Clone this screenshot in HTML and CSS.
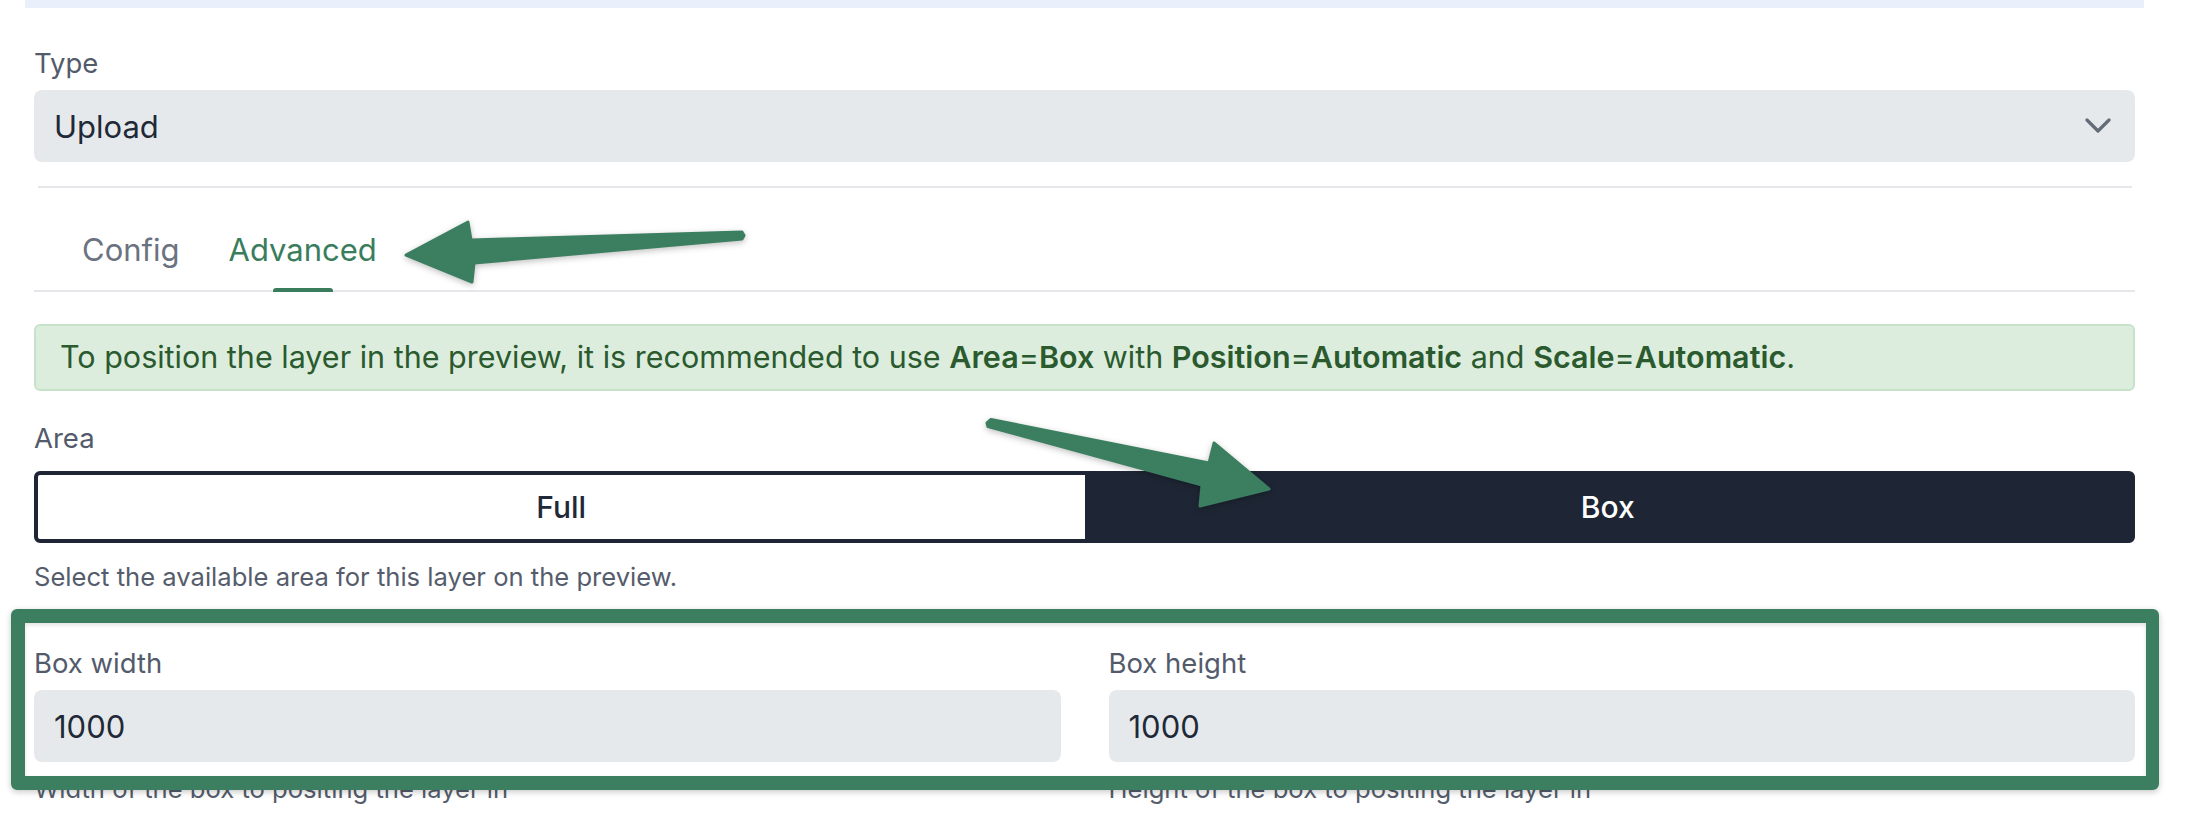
FILE: index.html
```html
<!DOCTYPE html>
<html lang="en">
<head>
<meta charset="utf-8">
<title>Layer settings</title>
<link rel="stylesheet" href="styles.css">
</head>
<body>
<div class="page">
  <div class="prev-edge"></div>

  <div class="field type-field">
    <div class="label">Type</div>
    <div class="select">
      <span>Upload</span>
      <svg class="chevron" width="26" height="16" viewBox="0 0 26 16"><path d="M2 2 L13 13 L24 2" fill="none" stroke="#656c79" stroke-width="3.2" stroke-linecap="round" stroke-linejoin="round"/></svg>
    </div>
  </div>

  <div class="divider"></div>

  <div class="tabs">
    <div class="tab">Config</div>
    <div class="tab active">Advanced</div>
  </div>

  <div class="alert">To position the layer in the preview, it is recommended to use <b>Area</b>=<b>Box</b> with <b>Position</b>=<b>Automatic</b> and <b>Scale</b>=<b>Automatic</b>.</div>

  <div class="field area-field">
    <div class="label area-label">Area</div>
    <div class="toggle">
      <div class="seg">Full</div>
      <div class="seg on">Box</div>
    </div>
    <div class="help">Select the available area for this layer on the preview.</div>
  </div>

  <div class="box-grid">
    <div class="field">
      <div class="label">Box width</div>
      <div class="input">1000</div>
      <div class="help desc">Width of the box to positing the layer in</div>
    </div>
    <div class="field">
      <div class="label">Box height</div>
      <div class="input">1000</div>
      <div class="help desc">Height of the box to positing the layer in</div>
    </div>
  </div>

  <div class="highlight"></div>

  <svg class="arrows" width="2186" height="814" viewBox="0 0 2186 814">
    <g fill="#3b7e60" stroke="#3b7e60" stroke-width="3" stroke-linejoin="round">
      <polygon points="406,255 468,222 471,240 742,232 744,235.5 742,239 474,263 472,282"/>
      <polygon points="991,419.5 1209,463 1214,443 1269,489 1200,506 1202,485 988,426.5 987,423"/>
    </g>
  </svg>
</div>
</body>
</html>
```

FILE: styles.css
```css
* { box-sizing: border-box; }

html, body {
  margin: 0;
  padding: 0;
  background: #ffffff;
}

body {
  font-family: "Inter", "Noto Sans", "Liberation Sans", sans-serif;
  color: #1f2937;
  overflow: hidden;
}

.page {
  position: relative;
  width: 2186px;
  height: 814px;
  padding: 0 51px 0 34px;
}

.prev-edge {
  height: 8px;
  margin: 0 -9px;
  background: #e9f0fb;
}

.label {
  font-size: 27.5px;
  line-height: 36px;
  color: #535b6b;
  margin-bottom: 9px;
}

.type-field {
  margin-top: 37px;
}

.select {
  height: 72px;
  background: #e6e9ec;
  border-radius: 8px;
  padding: 0 24px 0 20px;
  display: flex;
  align-items: center;
  justify-content: space-between;
  font-size: 31px;
  color: #1f2937;
}

.chevron { display: block; }

.divider {
  height: 2px;
  margin: 24px 3px 0 4px;
  background: #e5e7eb;
}

.tabs {
  display: flex;
  padding-left: 40px;
  border-bottom: 2px solid #e5e7eb;
}

.tab {
  position: relative;
  font-size: 31px;
  line-height: 40px;
  padding: 42px 8px 20px;
  margin-right: 33px;
  color: #6b7280;
}

.tab.active {
  color: #3a7d5d;
}

.tab.active::after {
  content: "";
  position: absolute;
  left: 50%;
  bottom: -2px;
  width: 60px;
  height: 4px;
  margin-left: -30px;
  border-radius: 3px 3px 0 0;
  background: #3a7d5d;
}

.alert {
  margin-top: 32px;
  height: 67px;
  padding: 11px 24px 12px;
  background: #dcedde;
  border: 2px solid #c6e3c9;
  border-radius: 6px;
  font-size: 30.5px;
  line-height: 40px;
  color: #2a5a2d;
  white-space: nowrap;
}

.alert b { font-weight: 600; }

.area-label {
  margin-top: 29px;
  margin-bottom: 15px;
}

.toggle {
  display: flex;
  height: 72px;
  border: 4px solid #1e2635;
  border-radius: 6px;
  overflow: hidden;
  background: #1e2635;
}

.seg {
  flex: 1;
  display: flex;
  align-items: center;
  justify-content: center;
  font-size: 30px;
  font-weight: 500;
  background: #ffffff;
  color: #1f2937;
}

.seg.on {
  background: #1e2635;
  color: #ffffff;
}

.help {
  font-size: 25.6px;
  line-height: 36px;
  color: #555d6c;
  margin-top: 16px;
}

.box-grid {
  display: grid;
  grid-template-columns: 1fr 1fr;
  column-gap: 48px;
  margin-top: 50px;
}

.input {
  height: 72px;
  background: #e6e9ec;
  border-radius: 8px;
  padding: 0 20px;
  display: flex;
  align-items: center;
  font-size: 31px;
  color: #1f2937;
}

.desc { margin-top: 9px; }

.highlight {
  position: absolute;
  left: 11px;
  top: 609px;
  width: 2148px;
  height: 181px;
  border: 14px solid #3b7e60;
  border-right-width: 13px;
  border-radius: 6px;
  box-shadow: 0 2px 6px rgba(0, 0, 0, 0.22), inset 0 2px 4px rgba(0, 0, 0, 0.12);
  pointer-events: none;
}

.arrows {
  position: absolute;
  left: 0;
  top: 0;
  pointer-events: none;
  filter: drop-shadow(0 2px 3px rgba(0, 0, 0, 0.25));
}
```
